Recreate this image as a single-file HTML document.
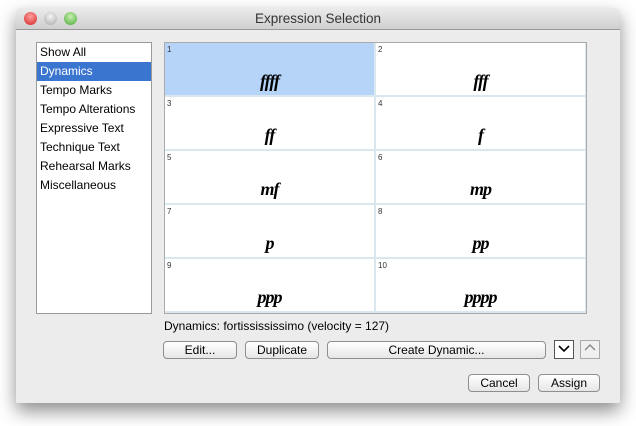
<!DOCTYPE html>
<html><head><style>
*{margin:0;padding:0;box-sizing:border-box}
body{width:636px;height:426px;background:#fff;font-family:"Liberation Sans",sans-serif;position:relative;overflow:hidden}
.win{position:absolute;left:16px;top:8px;width:604px;height:395px;background:#ececec;border-radius:5px 5px 2px 2px;box-shadow:0 8px 18px rgba(0,0,0,.45);overflow:hidden}
.tb{height:22px;background:linear-gradient(#ebebeb,#cfcfcf);border-bottom:1px solid #999;text-align:center;font-size:13.5px;line-height:22px;color:#333}
.dot{position:absolute;top:4px;width:13px;height:13px;border-radius:50%}
.list{position:absolute;left:20px;top:34px;width:116px;height:272px;background:#fff;border:1px solid #9a9a9a}
.list div{height:19px;line-height:19px;font-size:12px;padding-left:3px;color:#000}
.list .sel{background:#3a75d0;color:#fff}
.grid{position:absolute;left:148px;top:34px;width:423px;height:272px;background:#fff;border:1px solid #aaa;overflow:hidden}
.c{position:absolute;width:211px;height:54px;border-right:2px solid #dbe7ee;border-bottom:2px solid #dbe7ee}
.c span{position:absolute;left:2px;top:2px;font-size:8px;color:#333}
.c b{position:absolute;left:0;right:0;top:28px;text-align:center;font-family:"Liberation Serif",serif;font-style:italic;font-weight:bold;font-size:18px;letter-spacing:-1px}
.btn{position:absolute;height:18px;background:linear-gradient(#fff,#e6e6e6);border:1px solid #8e8e8e;border-radius:4px;font-size:12px;text-align:center;line-height:16px;color:#000}
.sq{position:absolute;width:20px;height:19px;border:1px solid #555;background:#fff;text-align:center}
</style></head><body>
<div class="win">
<div class="tb">Expression Selection</div>
<div class="dot" style="left:8px;background:radial-gradient(circle at 50% 35%,#ffa0a0,#d52222)"></div>
<div class="dot" style="left:28px;background:radial-gradient(circle at 50% 35%,#f4f4f4,#a9a9a9)"></div>
<div class="dot" style="left:48px;background:radial-gradient(circle at 50% 35%,#c8f0b0,#4aa93a)"></div>
<div class="list">
<div>Show All</div><div class="sel">Dynamics</div><div>Tempo Marks</div><div>Tempo Alterations</div><div>Expressive Text</div><div>Technique Text</div><div>Rehearsal Marks</div><div>Miscellaneous</div>
</div>
<div class="grid">
<div class="c" style="left:0;top:0;background:#b5d4f8"><span>1</span><b>ffff</b></div>
<div class="c" style="left:211px;top:0"><span>2</span><b>fff</b></div>
<div class="c" style="left:0;top:54px"><span>3</span><b>ff</b></div>
<div class="c" style="left:211px;top:54px"><span>4</span><b>f</b></div>
<div class="c" style="left:0;top:108px"><span>5</span><b>mf</b></div>
<div class="c" style="left:211px;top:108px"><span>6</span><b>mp</b></div>
<div class="c" style="left:0;top:162px"><span>7</span><b>p</b></div>
<div class="c" style="left:211px;top:162px"><span>8</span><b>pp</b></div>
<div class="c" style="left:0;top:216px"><span>9</span><b>ppp</b></div>
<div class="c" style="left:211px;top:216px"><span>10</span><b>pppp</b></div>
</div>
<div style="position:absolute;left:148px;top:311px;font-size:12px">Dynamics: fortissississimo (velocity = 127)</div>
<div class="btn" style="left:147px;top:333px;width:74px">Edit...</div>
<div class="btn" style="left:229px;top:333px;width:74px">Duplicate</div>
<div class="btn" style="left:311px;top:333px;width:219px">Create Dynamic...</div>
<div class="sq" style="left:538px;top:332px"><svg width="14" height="14" viewBox="0 0 14 14"><path d="M2 5l5 5 5-5" fill="none" stroke="#000" stroke-width="1.6"/></svg></div>
<div class="sq" style="left:564px;top:332px;border-color:#aaa;background:#f0f0f0"><svg width="14" height="14" viewBox="0 0 14 14"><path d="M2 9l5-5 5 5" fill="none" stroke="#888" stroke-width="1.4"/></svg></div>
<div class="btn" style="left:452px;top:366px;width:62px">Cancel</div>
<div class="btn" style="left:522px;top:366px;width:62px">Assign</div>
</div>
</body></html>
